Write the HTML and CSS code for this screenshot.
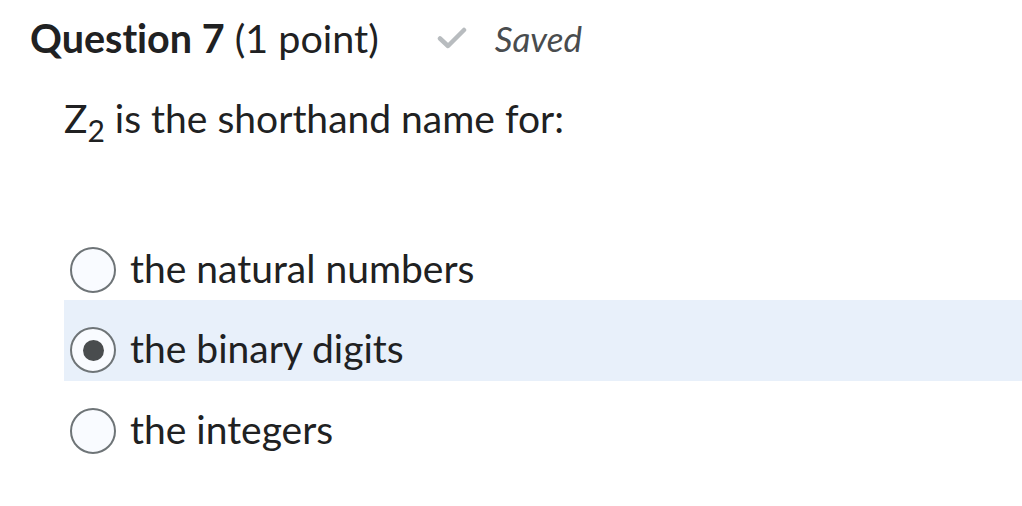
FILE: index.html
```html
<!DOCTYPE html>
<html>
<head>
<meta charset="utf-8">
<link rel="stylesheet" href="styles.css">
</head>
<body>
<div class="page">
  <div class="q-header">
    <h2 class="q-title"><strong>Question 7</strong> (1 point)</h2>
    <div class="saved">
      <svg class="check" viewBox="0 0 30 24" width="30" height="24"><path d="M3 12.5 L11 20 L27 4" fill="none" stroke="#b8bcbf" stroke-width="4.5" stroke-linecap="round" stroke-linejoin="round"/></svg>
      <span class="saved-text">Saved</span>
    </div>
  </div>
  <p class="q-text">Z<sub>2</sub> is the shorthand name for:</p>
  <div class="options">
    <label class="option"><span class="radio"></span><span class="opt-text">the natural numbers</span></label>
    <label class="option selected"><span class="radio checked"></span><span class="opt-text">the binary digits</span></label>
    <label class="option"><span class="radio"></span><span class="opt-text">the integers</span></label>
  </div>
</div>
</body>
</html>
```
FILE: styles.css
```css
html, body {
  margin: 0;
  padding: 0;
  background: #ffffff;
}
body {
  font-family: Lato, "Noto Sans", sans-serif;
  color: #202122;
  font-variant-ligatures: none;
}
.page {
  padding: 12px 0 0 30px;
}
.q-header {
  display: flex;
  align-items: center;
  gap: 58px;
  height: 52px;
}
.q-title {
  margin: 0;
  font-size: 39.5px;
  font-weight: 400;
  line-height: 52px;
  color: #202122;
}
.q-title strong {
  font-weight: 700;
}
.saved {
  display: flex;
  align-items: center;
  gap: 28px;
}
.saved-text {
  font-size: 35px;
  font-style: italic;
  color: #494c4e;
}
.q-text {
  margin: 32px 0 0 34px;
  font-size: 39px;
  line-height: 44px;
  color: #202122;
}
.q-text sub {
  font-size: 30px;
  line-height: 0;
  vertical-align: -9px;
}
.options {
  margin: 80px 0 0 34px;
  display: flex;
  flex-direction: column;
}
.option {
  box-sizing: border-box;
  display: flex;
  align-items: center;
  gap: 14px;
  height: 80px;
  padding: 19px 0 0 6px;
  font-size: 39px;
}
.option.selected {
  background: #e8f0fa;
  height: 81px;
}
.radio {
  box-sizing: border-box;
  width: 46px;
  height: 46px;
  border: 2px solid #6e7477;
  border-radius: 50%;
  background: #f9fbff;
  display: flex;
  align-items: center;
  justify-content: center;
  flex: none;
}
.radio.checked::after {
  content: "";
  width: 21px;
  height: 21px;
  border-radius: 50%;
  background: #494c4e;
}
.opt-text {
  color: #202122;
  margin-bottom: 4px;
}
```
